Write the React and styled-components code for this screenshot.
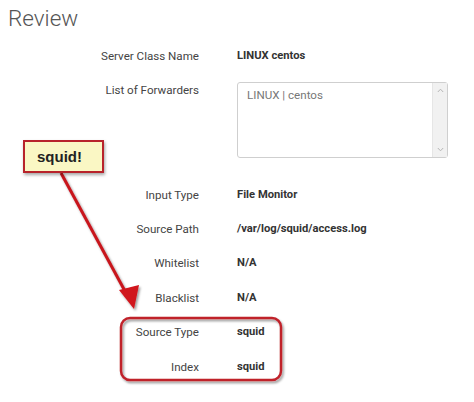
import React from "react";
import styled, { createGlobalStyle } from "styled-components";

const GlobalStyle = createGlobalStyle`
  html, body {
    margin: 0;
    padding: 0;
    background: #ffffff;
  }
  body {
    font-family: Roboto, "Liberation Sans", Arial, sans-serif;
  }
`;

const Page = styled.div`
  position: relative;
  width: 474px;
  height: 402px;
  overflow: hidden;
  padding: 0 0 0 8px;
  box-sizing: border-box;
`;

const Title = styled.h1`
  margin: 0;
  padding-top: 4px;
  height: 35px;
  font-size: 22.5px;
  line-height: 28px;
  font-weight: 300;
  color: #555555;
`;

const List = styled.div`
  display: flex;
  flex-direction: column;
`;

const Row = styled.div`
  display: flex;
  align-items: ${(p) => (p.$tall ? "flex-start" : "center")};
  height: ${(p) => (p.$tall ? "104px" : "34.4px")};
  padding-top: ${(p) => (p.$tall ? "10px" : "0")};
  box-sizing: border-box;
`;

const Label = styled.div`
  width: 191px;
  text-align: right;
  font-size: 11.6px;
  line-height: 14px;
  color: #444444;
`;

const Value = styled.div`
  margin-left: 38px;
  font-size: 11.2px;
  line-height: 14px;
  font-weight: 700;
  color: #333333;
`;

const TextBox = styled.div`
  margin-left: 38px;
  margin-top: -1px;
  width: 211px;
  height: 76px;
  border: 1px solid #cfcfcf;
  border-radius: 3px;
  box-sizing: border-box;
  display: flex;
  background: #ffffff;
`;

const BoxText = styled.div`
  flex: 1;
  padding: 5px 0 0 9px;
  font-size: 11.6px;
  line-height: 14px;
  color: #777777;
`;

const Scroll = styled.div`
  width: 15px;
  background: #f1f1f1;
  border-left: 1px solid #e6e6e6;
  display: flex;
  flex-direction: column;
  justify-content: space-between;
  align-items: center;
  padding: 5px 0;
  box-sizing: border-box;
`;

const Callout = styled.div`
  position: absolute;
  left: 23px;
  top: 140px;
  width: 81px;
  height: 33px;
  box-sizing: border-box;
  background: #faf7c4;
  border: 2px solid #b8232b;
  box-shadow: 1px 2px 3px rgba(0, 0, 0, 0.35);
  font-family: "Liberation Sans", Arial, sans-serif;
  font-weight: 700;
  font-size: 15px;
  line-height: 29px;
  padding-left: 12px;
  color: #222222;
`;

const Overlay = styled.svg`
  position: absolute;
  left: 0;
  top: 0;
  pointer-events: none;
`;

const Chevron = ({ up }) => (
  <svg width="7" height="5" viewBox="0 0 7 5">
    <path
      d={up ? "M0.8 4 L3.5 1.2 L6.2 4" : "M0.8 1 L3.5 3.8 L6.2 1"}
      fill="none"
      stroke="#b5b5b5"
      strokeWidth="1"
    />
  </svg>
);

const rows = [
  ["Input Type", "File Monitor"],
  ["Source Path", "/var/log/squid/access.log"],
  ["Whitelist", "N/A"],
  ["Blacklist", "N/A"],
  ["Source Type", "squid"],
  ["Index", "squid"],
];

export default function App() {
  return (
    <Page>
      <GlobalStyle />
      <Title>Review</Title>
      <List>
        <Row>
          <Label>Server Class Name</Label>
          <Value>LINUX centos</Value>
        </Row>
        <Row $tall>
          <Label>List of Forwarders</Label>
          <TextBox>
            <BoxText>LINUX | centos</BoxText>
            <Scroll>
              <Chevron up />
              <Chevron />
            </Scroll>
          </TextBox>
        </Row>
        {rows.map(([label, value]) => (
          <Row key={label}>
            <Label>{label}</Label>
            <Value>{value}</Value>
          </Row>
        ))}
      </List>

      <Overlay width="474" height="402" viewBox="0 0 474 402">
        <defs>
          <filter id="shadow" x="-20%" y="-20%" width="140%" height="140%">
            <feDropShadow dx="1.5" dy="2" stdDeviation="1.2" floodColor="#000" floodOpacity="0.4" />
          </filter>
        </defs>
        <g filter="url(#shadow)">
          <line x1="61" y1="173" x2="126" y2="293" stroke="#c8161e" strokeWidth="3" />
          <polygon points="119,290 139,285 134,309" fill="#d0141c" />
          <rect
            x="121"
            y="318"
            width="160"
            height="62"
            rx="9"
            fill="none"
            stroke="#c0222a"
            strokeWidth="2.5"
          />
        </g>
      </Overlay>
      <Callout>squid!</Callout>
    </Page>
  );
}
